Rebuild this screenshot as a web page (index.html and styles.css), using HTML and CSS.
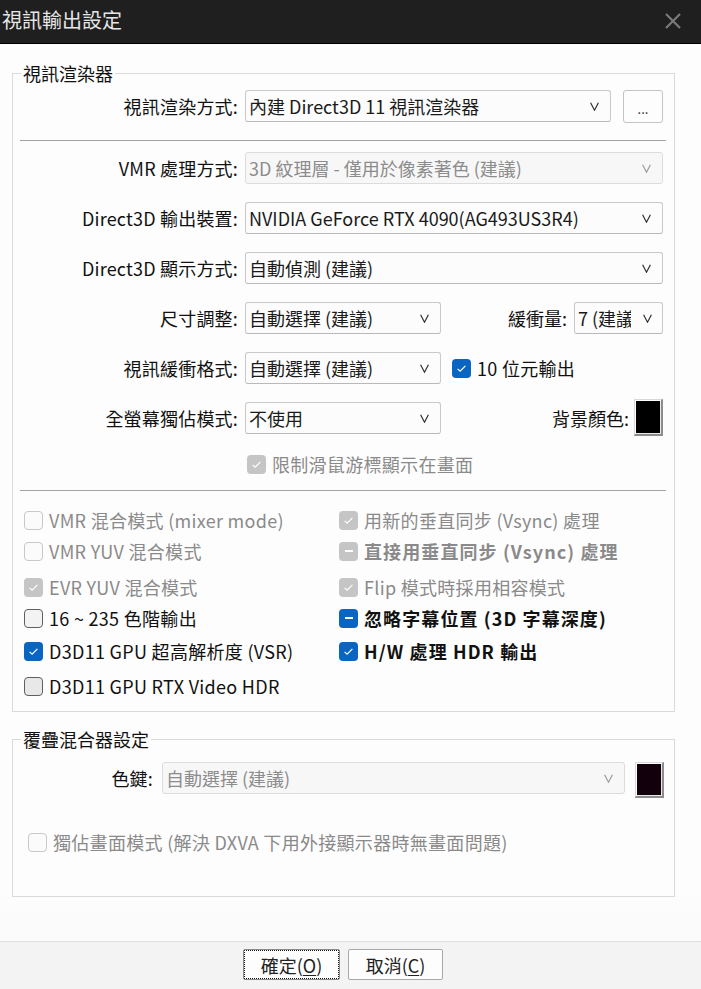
FILE: index.html
```html
<!DOCTYPE html>
<html lang="zh-Hant">
<head>
<meta charset="utf-8">
<title>視訊輸出設定</title>
<link rel="stylesheet" href="styles.css">
</head>
<body>
<div class="window">
  <div class="titlebar">
    <span class="title">視訊輸出設定</span>
    <svg class="close" width="16" height="16" viewBox="0 0 16 16"><path d="M1 1 L15 15 M15 1 L1 15" stroke="#7a7a7a" stroke-width="2.2" fill="none"/></svg>
  </div>

  <div class="content">
    <section class="group g1">
      <div class="legend">視訊渲染器</div>

      <div class="row">
        <span class="lbl">視訊渲染方式:</span>
        <div class="ctrl">
          <div class="select grow"><span class="val">內建 Direct3D 11 視訊渲染器</span><svg class="arrow" width="9" height="9" viewBox="0 0 9 9"><polyline points="0.6,0.8 4.5,8.2 8.4,0.8"/></svg></div>
          <div class="dots">...</div>
        </div>
      </div>

      <div class="sep"></div>

      <div class="rows">
        <div class="row">
          <span class="lbl">VMR 處理方式:</span>
          <div class="ctrl">
            <div class="select grow disabled"><span class="val">3D 紋理層 - 僅用於像素著色 (建議)</span><svg class="arrow" width="9" height="9" viewBox="0 0 9 9"><polyline points="0.6,0.8 4.5,8.2 8.4,0.8"/></svg></div>
          </div>
        </div>
        <div class="row">
          <span class="lbl">Direct3D 輸出裝置:</span>
          <div class="ctrl">
            <div class="select grow"><span class="val">NVIDIA GeForce RTX 4090(AG493US3R4)</span><svg class="arrow" width="9" height="9" viewBox="0 0 9 9"><polyline points="0.6,0.8 4.5,8.2 8.4,0.8"/></svg></div>
          </div>
        </div>
        <div class="row">
          <span class="lbl">Direct3D 顯示方式:</span>
          <div class="ctrl">
            <div class="select grow"><span class="val">自動偵測 (建議)</span><svg class="arrow" width="9" height="9" viewBox="0 0 9 9"><polyline points="0.6,0.8 4.5,8.2 8.4,0.8"/></svg></div>
          </div>
        </div>
        <div class="row">
          <span class="lbl">尺寸調整:</span>
          <div class="ctrl">
            <div class="select mid"><span class="val">自動選擇 (建議)</span><svg class="arrow" width="9" height="9" viewBox="0 0 9 9"><polyline points="0.6,0.8 4.5,8.2 8.4,0.8"/></svg></div>
            <span class="sublbl">緩衝量:</span>
            <div class="select small"><span class="val">7 (建議)</span><svg class="arrow" width="9" height="9" viewBox="0 0 9 9"><polyline points="0.6,0.8 4.5,8.2 8.4,0.8"/></svg></div>
          </div>
        </div>
        <div class="row">
          <span class="lbl">視訊緩衝格式:</span>
          <div class="ctrl">
            <div class="select mid"><span class="val">自動選擇 (建議)</span><svg class="arrow" width="9" height="9" viewBox="0 0 9 9"><polyline points="0.6,0.8 4.5,8.2 8.4,0.8"/></svg></div>
            <span class="check inline">
              <span class="cb on"><svg width="19" height="19" viewBox="0 0 19 19"><path d="M5.6 9.9 L8.1 12.2 L13.4 6.9"/></svg></span>
              <span class="txt">10 位元輸出</span>
            </span>
          </div>
        </div>
        <div class="row">
          <span class="lbl">全螢幕獨佔模式:</span>
          <div class="ctrl">
            <div class="select mid"><span class="val">不使用</span><svg class="arrow" width="9" height="9" viewBox="0 0 9 9"><polyline points="0.6,0.8 4.5,8.2 8.4,0.8"/></svg></div>
            <span class="sublbl swlbl">背景顏色:</span>
            <span class="swatch black"></span>
          </div>
        </div>
      </div>

      <div class="row limit">
        <span class="lbl"></span>
        <div class="ctrl">
          <span class="check dis">
            <span class="cb dis-on"><svg width="19" height="19" viewBox="0 0 19 19"><path d="M5.6 9.9 L8.1 12.2 L13.4 6.9"/></svg></span>
            <span class="txt">限制滑鼠游標顯示在畫面</span>
          </span>
        </div>
      </div>

      <div class="sep sep2"></div>

      <div class="checks">
        <span class="check dis"><span class="cb dis-off"></span><span class="txt">VMR 混合模式 (mixer mode)</span></span>
        <span class="check dis"><span class="cb dis-on"><svg width="19" height="19" viewBox="0 0 19 19"><path d="M5.6 9.9 L8.1 12.2 L13.4 6.9"/></svg></span><span class="txt">用新的垂直同步 (Vsync) 處理</span></span>

        <span class="check dis"><span class="cb dis-off"></span><span class="txt">VMR YUV 混合模式</span></span>
        <span class="check dis bold"><span class="cb dis-on"><i class="dash"></i></span><span class="txt">直接用垂直同步 (Vsync) 處理</span></span>

        <span class="check dis"><span class="cb dis-on"><svg width="19" height="19" viewBox="0 0 19 19"><path d="M5.6 9.9 L8.1 12.2 L13.4 6.9"/></svg></span><span class="txt">EVR YUV 混合模式</span></span>
        <span class="check dis"><span class="cb dis-on"><svg width="19" height="19" viewBox="0 0 19 19"><path d="M5.6 9.9 L8.1 12.2 L13.4 6.9"/></svg></span><span class="txt">Flip 模式時採用相容模式</span></span>

        <span class="check"><span class="cb off"></span><span class="txt">16 ~ 235 色階輸出</span></span>
        <span class="check bold"><span class="cb on"><i class="dash"></i></span><span class="txt">忽略字幕位置 (3D 字幕深度)</span></span>

        <span class="check"><span class="cb on"><svg width="19" height="19" viewBox="0 0 19 19"><path d="M5.6 9.9 L8.1 12.2 L13.4 6.9"/></svg></span><span class="txt">D3D11 GPU 超高解析度 (VSR)</span></span>
        <span class="check bold"><span class="cb on"><svg width="19" height="19" viewBox="0 0 19 19"><path d="M5.6 9.9 L8.1 12.2 L13.4 6.9"/></svg></span><span class="txt">H/W 處理 HDR 輸出</span></span>

        <span class="check"><span class="cb off hover"></span><span class="txt">D3D11 GPU RTX Video HDR</span></span>
        <span></span>
      </div>
    </section>

    <section class="group g2">
      <div class="legend">覆疊混合器設定</div>
      <div class="row keyrow">
        <span class="lbl lbl2">色鍵:</span>
        <div class="ctrl">
          <div class="select grow disabled"><span class="val">自動選擇 (建議)</span><svg class="arrow" width="9" height="9" viewBox="0 0 9 9"><polyline points="0.6,0.8 4.5,8.2 8.4,0.8"/></svg></div>
          <span class="swatch key"></span>
        </div>
      </div>
      <div class="excl">
        <span class="check dis"><span class="cb dis-off"></span><span class="txt">獨佔畫面模式 (解決 DXVA 下用外接顯示器時無畫面問題)</span></span>
      </div>
    </section>
  </div>

  <div class="footer">
    <button class="btn focus">確定(<u>O</u>)</button>
    <button class="btn">取消(<u>C</u>)</button>
  </div>
</div>
</body>
</html>
```

FILE: styles.css
```css
* { box-sizing: border-box; }

html, body {
  margin: 0;
  padding: 0;
}

body {
  font-family: "Noto Sans CJK TC", "Noto Sans", sans-serif;
  font-size: 18px;
  color: #111;
  background: #fcfcfc;
}

.window {
  width: 701px;
  height: 989px;
  display: flex;
  flex-direction: column;
  background: linear-gradient(#fdfdfd 0, #fdfdfd 890px, #f8f8f8 100%);
}

.titlebar {
  height: 44px;
  background: #1f1f1f;
  border-bottom: 1px solid #000;
  display: flex;
  align-items: center;
  justify-content: space-between;
  padding: 0 20px 3px 2px;
  flex-shrink: 0;
}

.title {
  color: #e6e6e6;
  font-size: 20px;
  line-height: 24px;
}

.close {
  margin-top: 1px;
}

.content {
  flex: 1;
  padding: 29px 26px 0 12px;
}

.group {
  position: relative;
  border: 1px solid #dadada;
}

.legend {
  position: absolute;
  top: -13px;
  left: 8px;
  padding: 0 2px;
  background: #fdfdfd;
  line-height: 24px;
  color: #111;
}

.g1 {
  padding: 16px 11px 13px 7px;
}

.row {
  display: flex;
  align-items: center;
  height: 32px;
  gap: 7px;
}

.lbl {
  width: 218px;
  flex-shrink: 0;
  text-align: right;
  white-space: nowrap;
  line-height: 24px;
  letter-spacing: 0.2px;
}

.ctrl {
  flex: 1;
  display: flex;
  align-items: center;
  height: 100%;
}

.select {
  height: 32px;
  border: 1px solid #c9c9c9;
  border-bottom-color: #b9b9b9;
  border-radius: 3px;
  background: #fcfcfc;
  display: flex;
  align-items: center;
  padding: 0 11px 0 3px;
  color: #1a1a1a;
  overflow: hidden;
}

.select .val {
  flex: 1;
  white-space: nowrap;
  overflow: hidden;
  line-height: 24px;
}

.select .arrow {
  flex-shrink: 0;
  margin-left: 6px;
}

.arrow polyline {
  fill: none;
  stroke: #303030;
  stroke-width: 1.2;
}

.select.disabled {
  background: #f7f7f7;
  border-color: #dcdcdc;
  color: #8c8c8c;
}

.select.disabled .arrow polyline {
  stroke: #9a9a9a;
}

.grow { flex: 1; }

.mid { width: 196px; }

.small {
  width: 89px;
  padding-right: 9px;
}

.small .val {
  width: 53px;
  flex: none;
  margin-right: 6px;
}

.dots {
  width: 40px;
  height: 33px;
  margin-left: 12px;
  border: 1px solid #c3c3c3;
  border-radius: 3px;
  background: #fdfdfd;
  text-align: center;
  font-size: 13px;
  line-height: 36px;
  color: #222;
  align-self: flex-start;
}

.sublbl {
  flex: 1;
  text-align: right;
  padding-right: 7px;
  white-space: nowrap;
  line-height: 24px;
}

.swlbl {
  padding-right: 5px;
}

.swatch {
  width: 29px;
  height: 37px;
  margin: -3px 0 -2px;
  background: #000;
  border-style: solid;
  border-width: 1px 2px 2px 1px;
  border-color: #d8d8d8 #8c8c8c #8c8c8c #d8d8d8;
  box-shadow: inset 1px 1px 0 #ffffff, inset -1px -1px 0 #e8e8e8;
  flex-shrink: 0;
}

.sep {
  height: 1px;
  background: #a3a3a3;
  margin: 18px -3px 11px 0;
}

.sep2 {
  margin: 16px -3px 17px 0;
}

.rows {
  display: flex;
  flex-direction: column;
  gap: 18px;
}

.limit {
  height: 20px;
  margin-top: 20px;
}

.limit .ctrl {
  padding-left: 2px;
}

/* checkboxes */
.check {
  display: flex;
  align-items: center;
  gap: 6px;
  white-space: nowrap;
  line-height: 24px;
  height: 24px;
}

.check .txt {
  letter-spacing: 0.3px;
}

.check.inline {
  margin-left: 11px;
}

.check.dis .txt {
  color: #8a8a8a;
}

.check.bold .txt {
  font-weight: 700;
  letter-spacing: 1.1px;
}

.cb {
  width: 19px;
  height: 19px;
  border-radius: 4px;
  flex-shrink: 0;
  display: flex;
  align-items: center;
  justify-content: center;
}

.cb svg path {
  fill: none;
  stroke: #fff;
  stroke-width: 1.2;
}

.cb.on {
  background: #0a65c2;
}

.cb.dis-on {
  background: #c5c5c5;
}

.cb.off {
  background: #f3f3f3;
  border: 1px solid #5f5f5f;
}

.cb.off.hover {
  background: #e8e8e8;
}

.cb.dis-off {
  background: #fbfbfb;
  border: 1px solid #c8c8c8;
}

.dash {
  display: block;
  width: 8px;
  height: 2px;
  background: #fff;
}

.checks {
  display: grid;
  grid-template-columns: 315px 1fr;
  grid-template-rows: 31px 36px 31px 33px 35px 24px;
  align-items: start;
  margin-left: 4px;
}

/* group 2 */
.g2 {
  margin-top: 27px;
  padding: 22px 10px 42px 7px;
}

.keyrow {
  align-items: flex-start;
  gap: 9px;
}

.lbl2 {
  width: 133px;
  align-self: center;
}

.keyrow .ctrl {
  align-items: flex-start;
}

.swatch.key {
  width: 29px;
  height: 36px;
  margin: 0 0 0 10px;
  background: #12000d;
}

.excl {
  margin-top: 36px;
  margin-left: 8px;
}

/* footer */
.footer {
  height: 48px;
  flex-shrink: 0;
  background: #f3f3f3;
  border-top: 1px solid #dedede;
  display: flex;
  align-items: flex-start;
  gap: 8px;
  padding: 7px 0 0 243px;
}

.btn {
  height: 31px;
  width: 97px;
  font-family: inherit;
  font-size: 18px;
  line-height: 24px;
  color: #222;
  background: #fdfdfd;
  border: 1px solid #a9a9a9;
  border-radius: 2px;
  padding: 0;
}

.btn + .btn {
  width: 95px;
}

.btn.focus {
  border-color: #8a8a8a;
  outline: 1px dotted #111;
  outline-offset: -2px;
}

.btn u {
  text-underline-offset: 2px;
}
```
